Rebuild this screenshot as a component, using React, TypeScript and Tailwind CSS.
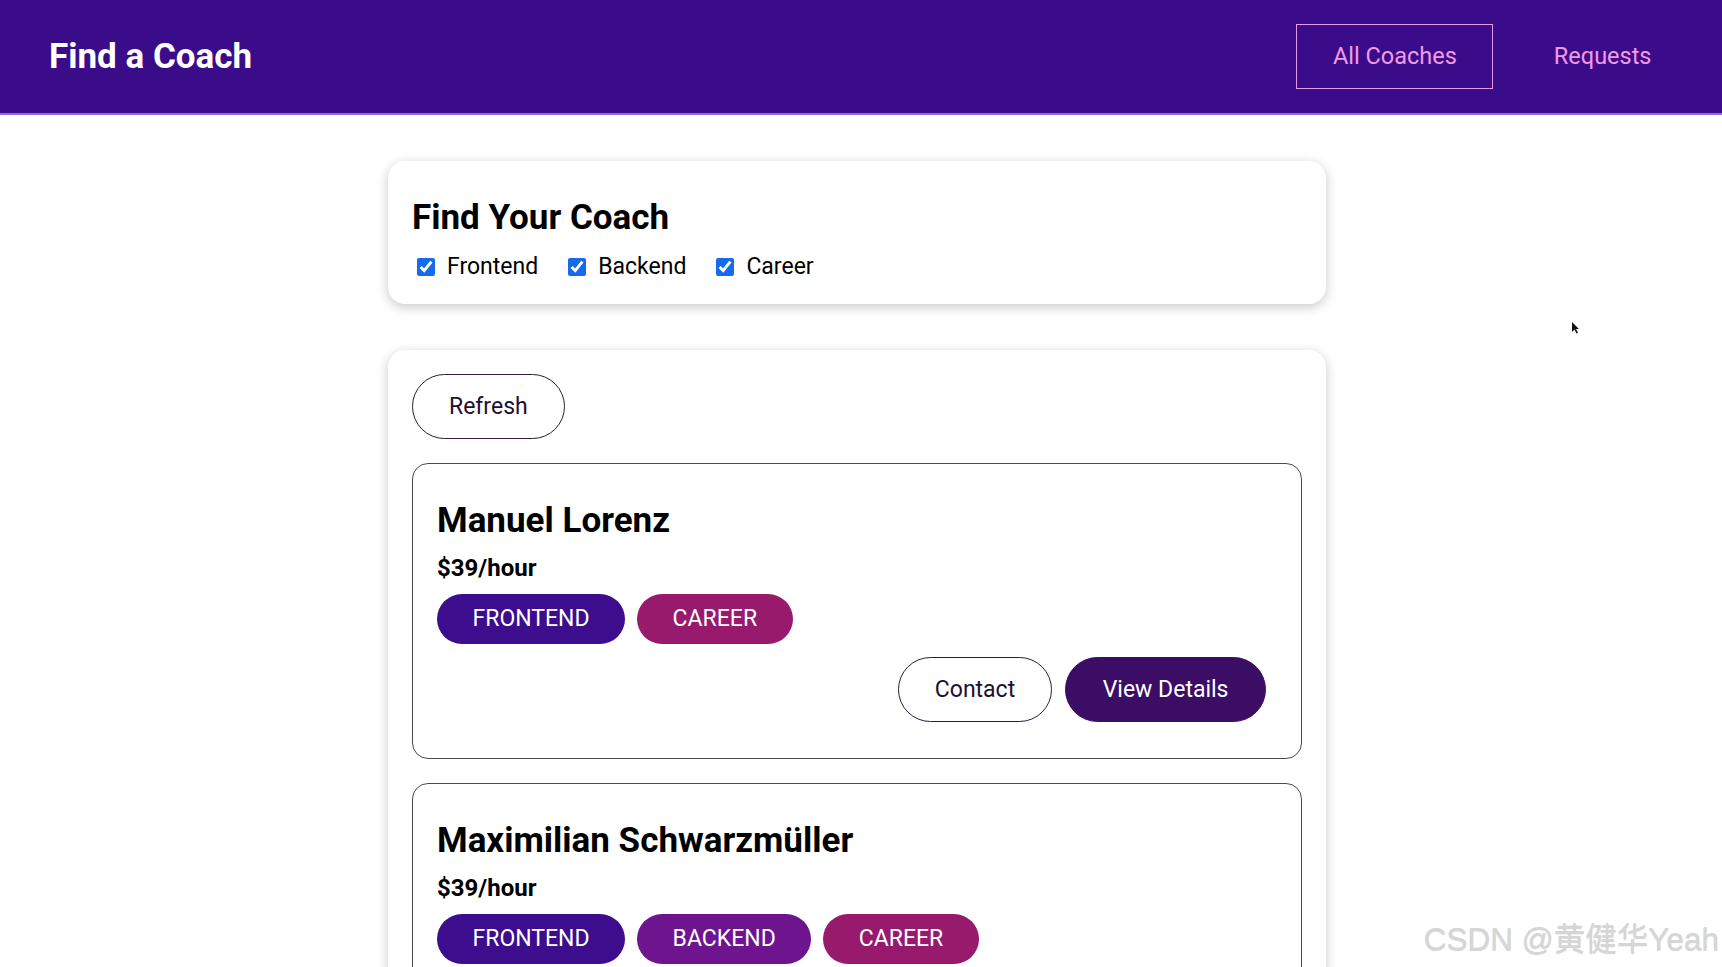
import React, { useState } from 'react';

/* ────────────── Types ────────────── */
type Area = 'frontend' | 'backend' | 'career';
interface Coach { id: string; name: string; rate: number; areas: Area[] }

const coaches: Coach[] = [
  { id: 'c1', name: 'Manuel Lorenz', rate: 39, areas: ['frontend', 'career'] },
  { id: 'c2', name: 'Maximilian Schwarzmüller', rate: 39, areas: ['frontend', 'backend', 'career'] },
];

const badgeColor: Record<Area, string> = {
  frontend: 'bg-[#3c0e8e]',
  backend: 'bg-[#6f148f]',
  career: 'bg-[#971a6c]',
};

/* ────────────── Pieces ────────────── */
function Badge({ area }: { area: Area }) {
  return (
    <span className={`${badgeColor[area]} inline-block rounded-full px-[35.5px] py-[11px] text-[23px] leading-[28px] text-white uppercase`}>
      {area}
    </span>
  );
}

function OutlineButton({ children }: { children: React.ReactNode }) {
  return (
    <button className="rounded-full border border-[#2a1a3e] bg-transparent px-[36px] py-[17px] text-[23px] leading-[29px] text-[#1e1030]">
      {children}
    </button>
  );
}

function CoachItem({ coach }: { coach: Coach }) {
  return (
    <li className="mt-[24px] rounded-[16px] border-[1.5px] border-[#4a4a4a] px-[24px] pt-[24px] pb-[24px]">
      <h3 className="mt-[12px] text-[35px] leading-[41px] font-bold text-black">{coach.name}</h3>
      <h4 className="mt-[13px] text-[24px] leading-[28px] font-bold text-black">${coach.rate}/hour</h4>
      <div className="mt-[12px] flex gap-[12px]">
        {coach.areas.map(a => <Badge key={a} area={a} />)}
      </div>
      <div className="mt-[13px] mb-[12px] flex justify-end gap-[13px] pr-[11px]">
        <OutlineButton>Contact</OutlineButton>
        <button className="rounded-full border border-[#3b0d65] bg-[#3b0d65] px-[36.5px] py-[17px] text-[23px] leading-[29px] text-white">
          View Details
        </button>
      </div>
    </li>
  );
}

/* ────────────── Main Component ────────────── */
export default function App() {
  const [filters, setFilters] = useState({ frontend: true, backend: true, career: true });

  const toggle = (k: Area) => setFilters(f => ({ ...f, [k]: !f[k] }));

  return (
    <div className="relative h-[967px] overflow-hidden bg-white font-['Roboto','Liberation_Sans',sans-serif]">
      {/* ── Header ── */}
      <header className="flex h-[115px] items-center justify-between border-b-[2px] border-[#8a6fd6] bg-[#3a0c8a] pl-[49px] pr-[34px]">
        <h1 className="text-[35px] leading-[42px] font-bold text-white">Find a Coach</h1>
        <nav className="flex gap-[24px]">
          <a className="border border-[#e59af0] px-[35.5px] py-[17px] text-[23.5px] leading-[29px] text-[#f39ae6]">All Coaches</a>
          <a className="border border-transparent px-[35.5px] py-[17px] text-[23.5px] leading-[29px] text-[#f39ae6]">Requests</a>
        </nav>
      </header>

      <main className="pr-[8px]">
        {/* ── Filter ── */}
        <section className="mx-auto mt-[46px] w-[938px] rounded-[17px] bg-white px-[24px] pt-[24px] pb-[24px] shadow-[0_3px_12px_rgba(0,0,0,0.22)]">
          <h2 className="mt-[12px] text-[35px] leading-[41px] font-bold text-black">Find Your Coach</h2>
          <div className="mt-[15px] flex items-center text-[23px] leading-[27px] text-black">
            {(['frontend', 'backend', 'career'] as Area[]).map((k, i) => (
              <label key={k} className={`flex items-center gap-[12px] ${i === 0 ? 'ml-[5px]' : 'ml-[30px]'}`}>
                <input
                  type="checkbox"
                  checked={filters[k]}
                  onChange={() => toggle(k)}
                  className="h-[18px] w-[18px] accent-[#1769ee]"
                />
                <span className="capitalize">{k}</span>
              </label>
            ))}
          </div>
        </section>

        {/* ── Coach List ── */}
        <section className="mx-auto mt-[46px] w-[938px] rounded-[17px] bg-white p-[24px] shadow-[0_3px_12px_rgba(0,0,0,0.22)]">
          <div className="flex">
            <OutlineButton>Refresh</OutlineButton>
          </div>
          <ul>
            {coaches.map(c => <CoachItem key={c.id} coach={c} />)}
          </ul>
        </section>
      </main>

      {/* cursor */}
      <svg className="absolute left-[1571px] top-[321px]" width="9" height="13" viewBox="0 0 9 13">
        <path d="M1 1 L1 11 L3.5 8.5 L5.5 12.5 L7 11.8 L5 8 L8 8 Z" fill="#111" />
      </svg>

      {/* watermark */}
      <div className="absolute top-[920px] right-[3px] text-[31.5px] leading-[38px] text-[#d6d6d6] [text-shadow:0_1px_1px_rgba(0,0,0,0.18)] font-['Liberation_Sans','Noto_Sans_CJK_SC',sans-serif]">
        CSDN @黄健华Yeah
      </div>
    </div>
  );
}
